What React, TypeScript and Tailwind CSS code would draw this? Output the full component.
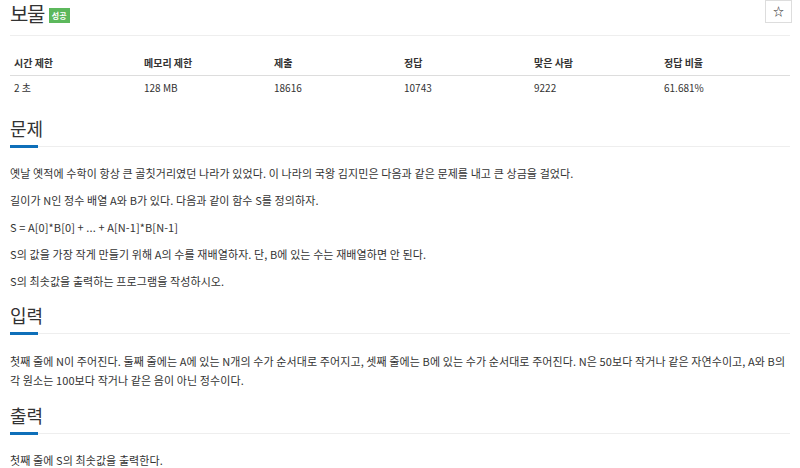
import React from "react";

const stats = [
  { label: "시간 제한", value: "2 초" },
  { label: "메모리 제한", value: "128 MB" },
  { label: "제출", value: "18616" },
  { label: "정답", value: "10743" },
  { label: "맞은 사람", value: "9222" },
  { label: "정답 비율", value: "61.681%" },
];

function Section({ title, children }: { title: string; children: React.ReactNode }) {
  return (
    <section className="pt-[13px]">
      <div className="relative border-b border-[#eeeeee] pb-[6px]">
        <h2 className="text-[18px] leading-[24px] text-[#333]">{title}</h2>
        <div className="absolute left-0 bottom-[-2px] h-[3px] w-[28px] bg-[#0e6fb9]" />
      </div>
      <div className="pt-[18px] text-[11px] tracking-[0.1px] text-[#333]">{children}</div>
    </section>
  );
}

export default function App() {
  return (
    <div
      className="w-[800px] h-[468px] overflow-hidden bg-white px-[10px] text-[#333]"
      style={{ fontFamily: '"Noto Sans CJK KR", "Noto Sans", sans-serif' }}
    >
      <div className="flex h-[36px] items-start justify-between border-b border-[#eeeeee]">
        <div className="flex h-[28px] items-center gap-[5px]">
          <h1 className="text-[20px] leading-[28px] text-[#333] tracking-[-1.5px]">보물</h1>
          <span className="mt-[3px] bg-[#5cb85c] px-[3px] py-[2px] text-[8px] leading-[11px] font-bold text-white">
            성공
          </span>
        </div>
        <button className="mr-[-2px] flex h-[23px] w-[27px] items-center justify-center border border-[#dddddd] text-[11px] leading-none text-[#222]">
          ☆
        </button>
      </div>

      <div className="pt-[13px] pb-[4px]">
        <table className="w-full table-fixed text-left text-[10px]">
          <thead>
            <tr className="border-b border-[#dddddd]">
              {stats.map((s) => (
                <th key={s.label} className="px-[4px] pt-[6px] pb-[5px] font-bold">
                  {s.label}
                </th>
              ))}
            </tr>
          </thead>
          <tbody>
            <tr>
              {stats.map((s) => (
                <td key={s.label} className="px-[4px] py-[4px]">
                  {s.value}
                </td>
              ))}
            </tr>
          </tbody>
        </table>
      </div>

      <Section title="문제">
        <div className="flex flex-col gap-[10px] leading-[17px]">
          <p>옛날 옛적에 수학이 항상 큰 골칫거리였던 나라가 있었다. 이 나라의 국왕 김지민은 다음과 같은 문제를 내고 큰 상금을 걸었다.</p>
          <p>길이가 N인 정수 배열 A와 B가 있다. 다음과 같이 함수 S를 정의하자.</p>
          <p>S = A[0]*B[0] + ... + A[N-1]*B[N-1]</p>
          <p>S의 값을 가장 작게 만들기 위해 A의 수를 재배열하자. 단, B에 있는 수는 재배열하면 안 된다.</p>
          <p>S의 최솟값을 출력하는 프로그램을 작성하시오.</p>
        </div>
      </Section>

      <Section title="입력">
        <p className="leading-[19px]">
          첫째 줄에 N이 주어진다. 둘째 줄에는 A에 있는 N개의 수가 순서대로 주어지고, 셋째 줄에는 B에 있는 수가 순서대로 주어진다. N은 50보다 작거나 같은 자연수이고, A와 B의 각 원소는 100보다 작거나 같은 음이 아닌 정수이다.
        </p>
      </Section>

      <Section title="출력">
        <p className="leading-[17px]">첫째 줄에 S의 최솟값을 출력한다.</p>
      </Section>
    </div>
  );
}
